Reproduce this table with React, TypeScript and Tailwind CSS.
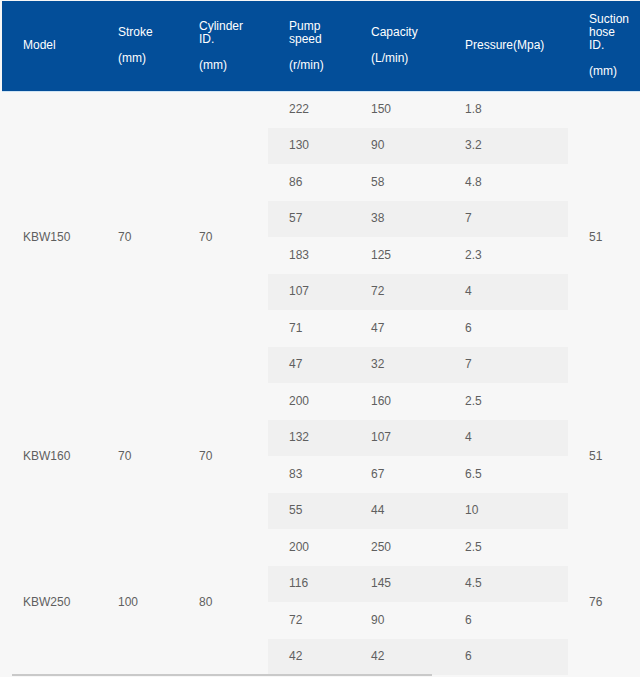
import React from 'react';

type Group = {
  model: string;
  stroke: string;
  cylinder: string;
  suction: string;
  rows: [string, string, string][];
};

const groups: Group[] = [
  {
    model: 'KBW150',
    stroke: '70',
    cylinder: '70',
    suction: '51',
    rows: [
      ['222', '150', '1.8'],
      ['130', '90', '3.2'],
      ['86', '58', '4.8'],
      ['57', '38', '7'],
      ['183', '125', '2.3'],
      ['107', '72', '4'],
      ['71', '47', '6'],
      ['47', '32', '7'],
    ],
  },
  {
    model: 'KBW160',
    stroke: '70',
    cylinder: '70',
    suction: '51',
    rows: [
      ['200', '160', '2.5'],
      ['132', '107', '4'],
      ['83', '67', '6.5'],
      ['55', '44', '10'],
    ],
  },
  {
    model: 'KBW250',
    stroke: '100',
    cylinder: '80',
    suction: '76',
    rows: [
      ['200', '250', '2.5'],
      ['116', '145', '4.5'],
      ['72', '90', '6'],
      ['42', '42', '6'],
    ],
  },
];

const th = 'pl-[21px] pr-[20px] text-left align-middle font-normal';
const td = 'pl-[21px] pr-[20px] text-left align-middle';

const App: React.FC = () => {
  let idx = 0;
  return (
    <div className="w-[640px] h-[677px] overflow-hidden bg-[#f7f7f7] pl-[2px] pt-[1px]" style={{ fontFamily: '"Liberation Sans", Arial, sans-serif' }}>
      <table className="table-fixed border-collapse w-[638px] text-[12px] leading-[13px] text-[#5f5f5f]">
        <colgroup>
          <col className="w-[95px]" />
          <col className="w-[81px]" />
          <col className="w-[90px]" />
          <col className="w-[82px]" />
          <col className="w-[94px]" />
          <col className="w-[124px]" />
          <col className="w-[72px]" />
        </colgroup>
        <thead>
          <tr className="h-[90px] bg-[#034e99] text-white border-b border-[#cfe4f4]">
            <th className={th}>Model</th>
            <th className={th}>Stroke<br /><br />(mm)</th>
            <th className={th}>Cylinder ID.<br /><br />(mm)</th>
            <th className={th}>Pump speed<br /><br />(r/min)</th>
            <th className={th}>Capacity<br /><br />(L/min)</th>
            <th className={th}>Pressure(Mpa)</th>
            <th className={th}>Suction hose ID.<br /><br />(mm)</th>
          </tr>
        </thead>
        <tbody>
          {groups.map((g) =>
            g.rows.map((r, i) => {
              const striped = idx++ % 2 === 1;
              const bg = striped ? 'bg-[#f0f0f0]' : '';
              return (
                <tr key={g.model + i} className="h-[36.5px]">
                  {i === 0 && (
                    <>
                      <td rowSpan={g.rows.length} className={td}>{g.model}</td>
                      <td rowSpan={g.rows.length} className={td}>{g.stroke}</td>
                      <td rowSpan={g.rows.length} className={td}>{g.cylinder}</td>
                    </>
                  )}
                  <td className={`${td} ${bg}`}>{r[0]}</td>
                  <td className={`${td} ${bg}`}>{r[1]}</td>
                  <td className={`${td} ${bg}`}>{r[2]}</td>
                  {i === 0 && (
                    <td rowSpan={g.rows.length} className={td}>{g.suction}</td>
                  )}
                </tr>
              );
            })
          )}
        </tbody>
      </table>
      <div className="ml-[10px] mt-[-1px] h-[2px] w-[420px] bg-[#c9c9c9]" />
    </div>
  );
};

export default App;
